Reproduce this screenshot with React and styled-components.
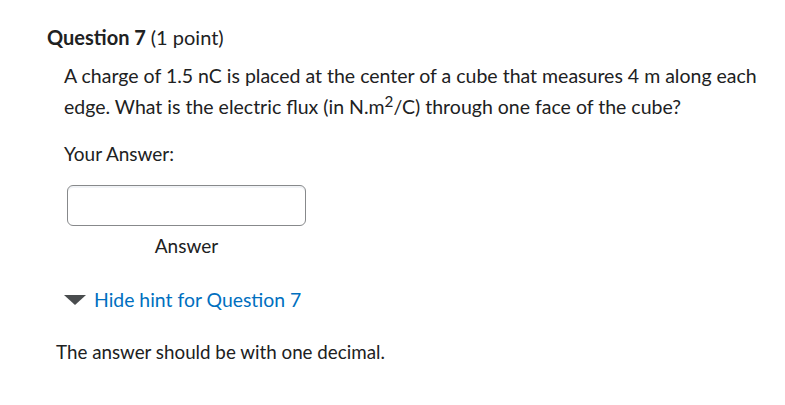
import styled, { createGlobalStyle } from 'styled-components'

const GlobalStyle = createGlobalStyle`
  body {
    margin: 0;
    background: #fff;
    font-family: Lato, "Open Sans", sans-serif;
    color: #202122;
  }
`

const Page = styled.div`
  padding: 25px 0 0 47px;
`

const Heading = styled.h2`
  margin: 0;
  font-size: 20px;
  font-weight: 700;
  line-height: 24px;
`

const Points = styled.span`
  font-weight: 400;
`

const Body = styled.div`
  padding: 11px 0 0 17px;
`

const Prompt = styled.p`
  margin: 0;
  font-size: 19.5px;
  line-height: 31px;
  width: 712px;
`

const Sup = styled.sup`
  font-size: 0.78em;
  line-height: 0;
`

const Label = styled.div`
  margin-top: 20px;
  font-size: 19px;
  line-height: 24px;
`

const AnswerBlock = styled.div`
  display: flex;
  flex-direction: column;
  align-items: center;
  width: 239px;
  margin: 19px 0 0 3px;
`

const Input = styled.input`
  box-sizing: border-box;
  width: 239px;
  height: 41px;
  border: 1px solid #87898b;
  border-radius: 6px;
  background: #fff;
  box-shadow: inset 0 2px 0 0 rgba(185, 194, 208, 0.2);
`

const Caption = styled.div`
  margin-top: 8px;
  font-size: 19px;
  line-height: 24px;
`

const HintToggle = styled.div`
  display: flex;
  align-items: center;
  gap: 8px;
  margin: 30px 0 0 0;
`

const Link = styled.a`
  color: #006fbf;
  font-size: 19.4px;
  line-height: 24px;
  text-decoration: none;
`

const Hint = styled.p`
  margin: 28px 0 0 -8px;
  font-size: 18.8px;
  line-height: 24px;
`

export default function App() {
  return (
    <>
      <GlobalStyle />
      <Page>
        <Heading>
          Question 7 <Points>(1 point)</Points>
        </Heading>
        <Body>
          <Prompt>
            A charge of 1.5 nC is placed at the center of a cube that measures 4 m along each
            edge. What is the electric flux (in N.m<Sup>2</Sup>/C) through one face of the cube?
          </Prompt>
          <Label>Your Answer:</Label>
          <AnswerBlock>
            <Input type="text" aria-label="Answer" />
            <Caption>Answer</Caption>
          </AnswerBlock>
          <HintToggle>
            <svg width="22" height="10" viewBox="0 0 22 10">
              <path d="M0 0 H22 L11 10 Z" fill="#494c4e" />
            </svg>
            <Link href="#">Hide hint for Question 7</Link>
          </HintToggle>
          <Hint>The answer should be with one decimal.</Hint>
        </Body>
      </Page>
    </>
  )
}
